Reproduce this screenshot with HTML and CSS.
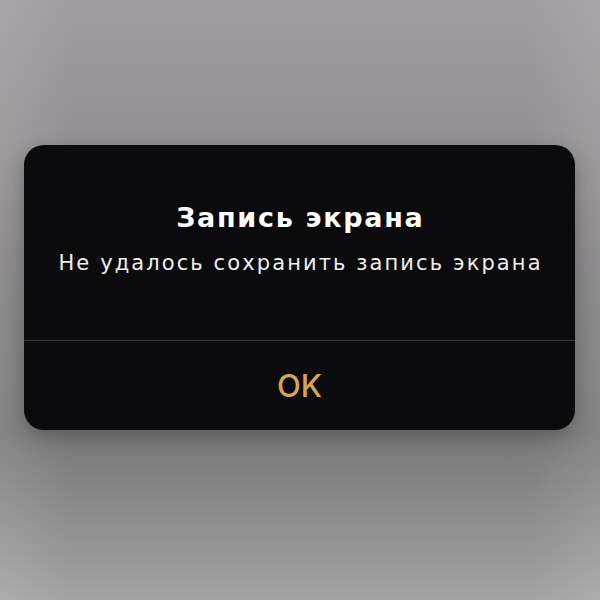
FILE: index.html
```html
<!DOCTYPE html>
<html lang="ru">
<head>
<meta charset="utf-8">
<title>Запись экрана</title>
<link rel="stylesheet" href="styles.css">
</head>
<body>
<div class="screen">
  <div class="alert">
    <div class="alert-body">
      <div class="alert-title">Запись экрана</div>
      <div class="alert-message">Не удалось сохранить запись экрана</div>
    </div>
    <div class="alert-actions">
      <div class="alert-button">OK</div>
    </div>
  </div>
</div>
</body>
</html>
```

FILE: styles.css
```css
html, body {
  margin: 0;
  padding: 0;
}

body {
  width: 600px;
  height: 600px;
  overflow: hidden;
  font-family: Inter, "Noto Sans", sans-serif;
  background: linear-gradient(180deg, #a09da0 0%, #938f92 25%, #817f81 45%, #777777 72%, #8d8d8d 86%, #a3a3a3 100%);
}

.screen {
  width: 600px;
  height: 600px;
  box-sizing: border-box;
  padding-top: 145px;
  padding-left: 24px;
  background: linear-gradient(90deg, rgba(255,255,255,0.10) 0%, rgba(255,255,255,0) 12%, rgba(255,255,255,0) 88%, rgba(255,255,255,0.10) 100%);
}

.alert {
  width: 551px;
  height: 285px;
  background: #0b0a0c;
  border-radius: 20px;
  display: flex;
  flex-direction: column;
  box-shadow: 0 6px 18px rgba(40, 40, 40, 0.35);
}

.alert-body {
  padding-top: 57px;
  height: 196px;
  box-sizing: border-box;
  border-bottom: 1px solid #393839;
  display: flex;
  flex-direction: column;
  align-items: center;
}

.alert-title {
  font-family: "DejaVu Sans", sans-serif;
  color: #ffffff;
  font-size: 27px;
  line-height: 32px;
  font-weight: 700;
  letter-spacing: 1.7px;
  padding-left: 1.7px;
}

.alert-message {
  font-family: "DejaVu Sans", sans-serif;
  margin-top: 16px;
  color: #efefef;
  font-size: 21px;
  line-height: 26px;
  font-weight: 400;
  letter-spacing: 2.1px;
  padding-left: 2.1px;
}

.alert-actions {
  flex: 1;
  display: flex;
  align-items: center;
  justify-content: center;
}

.alert-button {
  color: #d8a450;
  font-size: 31px;
  line-height: 36px;
  font-weight: 500;
}
```
